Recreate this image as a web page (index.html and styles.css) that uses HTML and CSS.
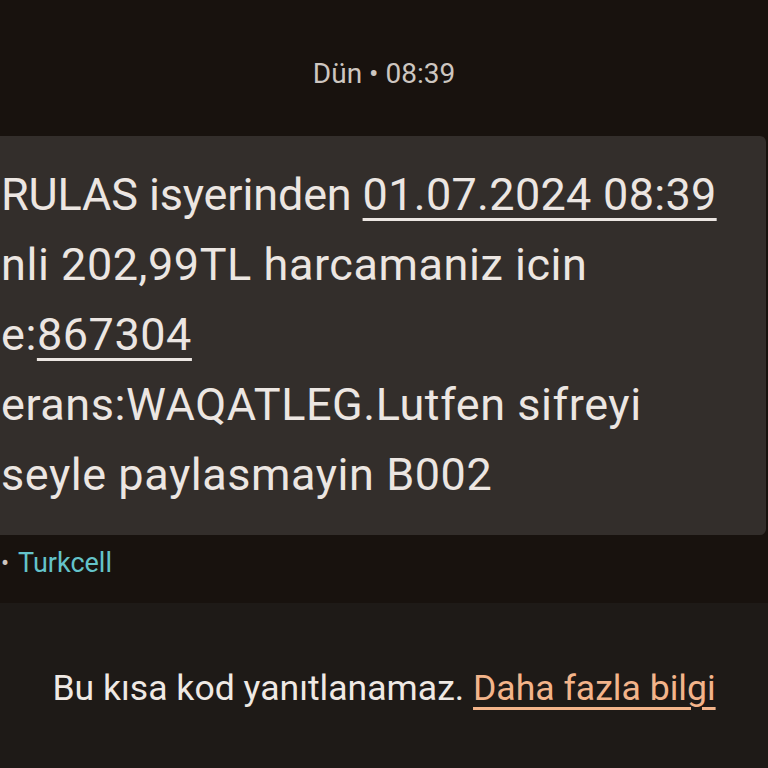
FILE: index.html
```html
<!DOCTYPE html>
<html lang="tr">
<head>
    <meta charset="UTF-8">
    <title>Mesaj</title>
    <link rel="stylesheet" href="styles.css">
</head>
<body>
    <div class="thread">
        <div class="date-row">Dün • 08:39</div>

        <div class="bubble">
            <div class="line first">RULAS isyerinden <span class="link date">01.07.2024 08:39</span></div>
            <div class="line">nli 202,99TL harcamaniz icin</div>
            <div class="line">e:<span class="link">867304</span></div>
            <div class="line">erans:WAQATLEG.Lutfen sifreyi</div>
            <div class="line">seyle paylasmayin B002</div>
        </div>

        <div class="meta"><span class="dot">•</span><span class="sim">Turkcell</span></div>
    </div>

    <div class="footer">
        Bu kısa kod yanıtlanamaz.&nbsp;<a href="#" class="more">Daha fazla bilgi</a>
    </div>
</body>
</html>
```

FILE: styles.css
```css
html, body {
    margin: 0;
    padding: 0;
    height: 100%;
}

body {
    background-color: #18120e;
    font-family: Roboto, "Noto Sans", sans-serif;
    color: #ece6e2;
    overflow: hidden;
    display: flex;
    flex-direction: column;
}

.thread {
    height: 603px;
    display: flex;
    flex-direction: column;
}

.date-row {
    height: 136px;
    display: flex;
    align-items: center;
    justify-content: center;
    font-size: 28px;
    color: #cdc6c0;
    padding-top: 10px;
    box-sizing: border-box;
}

.bubble {
    height: 399px;
    background-color: #332e2b;
    margin-right: 2px;
    border-radius: 0 6px 6px 0;
    padding-top: 24px;
    box-sizing: border-box;
    font-size: 45px;
    line-height: 70px;
    letter-spacing: 0.55px;
    overflow: hidden;
}

.line {
    white-space: nowrap;
    margin-left: 1px;
}

.first {
    letter-spacing: -0.15px;
}

.link {
    text-decoration: underline;
    text-decoration-thickness: 3px;
    text-underline-offset: 8px;
}

.date {
    letter-spacing: 0.3px;
}

.meta {
    flex: 1;
    display: flex;
    align-items: center;
    padding-bottom: 12px;
    font-size: 27px;
    color: #cdc6c0;
}

.dot {
    font-size: 24px;
    margin-left: 1px;
    margin-right: 9px;
}

.sim {
    color: #64c3ca;
}

.footer {
    flex: 1;
    background-color: #1e1a17;
    display: flex;
    align-items: center;
    justify-content: center;
    font-size: 35.6px;
    color: #efe9e4;
    padding-top: 4px;
}

.more {
    color: #f3b48a;
    text-decoration: underline;
    text-decoration-thickness: 3px;
    text-underline-offset: 7px;
}
```
